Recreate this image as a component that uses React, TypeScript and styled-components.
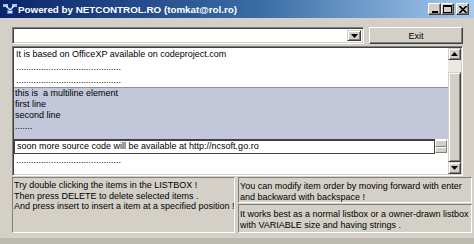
import styled, { createGlobalStyle } from "styled-components";

const GlobalStyle = createGlobalStyle`
  html, body {
    margin: 0;
    padding: 0;
    background: #d4d0c8;
  }
  body {
    font-family: "Liberation Sans", Arial, sans-serif;
    color: #000;
  }
  * {
    box-sizing: border-box;
  }
`;

const Window = styled.div`
  width: 474px;
  height: 244px;
  display: flex;
  flex-direction: column;
  background: #d4d0c8;
  overflow: hidden;
  border-bottom: 6px solid #bcb9b1;
`;

const TitleBar = styled.div`
  height: 18px;
  flex: none;
  display: flex;
  align-items: center;
  padding: 0 5px 0 3px;
  background: linear-gradient(to right, #0a246a 0%, #3a6ea5 55%, #a6caf0 100%);
`;

const TitleText = styled.span`
  flex: 1;
  margin-left: 1px;
  color: #fff;
  font-weight: bold;
  font-size: 9.8px;
  white-space: nowrap;
`;

const CaptionButton = styled.div<{ $gap?: boolean }>`
  width: 13px;
  height: 12px;
  margin-left: ${(p) => (p.$gap ? 2 : 0)}px;
  background: #d4d0c8;
  border: 1px solid;
  border-color: #fff #404040 #404040 #fff;
  box-shadow: inset -1px -1px #808080;
  display: flex;
  align-items: center;
  justify-content: center;
`;

const Body = styled.div`
  flex: 1;
  display: flex;
  flex-direction: column;
  padding: 9px 11px 0 12px;
`;

const TopRow = styled.div`
  display: flex;
  gap: 5px;
  height: 17px;
`;

const Combo = styled.div`
  flex: 1;
  display: flex;
  justify-content: flex-end;
  align-items: stretch;
  background: #fff;
  border: 1px solid;
  border-color: #808080 #fff #fff #808080;
  box-shadow: inset 1px 1px #404040, inset -1px -1px #d4d0c8;
  padding: 2px;
`;

const DropButton = styled.div`
  width: 14px;
  background: #d4d0c8;
  border: 1px solid;
  border-color: #d4d0c8 #404040 #404040 #d4d0c8;
  box-shadow: inset 1px 1px #fff, inset -1px -1px #808080;
  display: flex;
  align-items: center;
  justify-content: center;
`;

const ExitButton = styled.div`
  width: 94px;
  display: flex;
  align-items: center;
  justify-content: center;
  font-size: 9px;
  background: #d4d0c8;
  border: 1px solid;
  border-color: #fff #404040 #404040 #fff;
  box-shadow: inset -1px -1px #808080;
`;

const ListBox = styled.div`
  margin-top: 2px;
  height: 130px;
  display: flex;
  background: #fff;
  border: 1px solid;
  border-color: #808080 #fff #fff #808080;
  box-shadow: inset 1px 1px #404040, inset -1px -1px #d4d0c8;
  padding: 1px;
`;

const Items = styled.div`
  flex: 1;
  display: flex;
  flex-direction: column;
  font-size: 9px;
  min-width: 0;
`;

const Row = styled.div`
  height: 13px;
  line-height: 13px;
  padding-left: 2px;
  white-space: nowrap;
`;

const MultiBlock = styled.div`
  height: 52px;
  background: #c2c7da;
  border-top: 1px solid #8e92a0;
  padding: 0 0 0 1px;
  line-height: 11px;
  white-space: nowrap;
`;

const EditRow = styled.div`
  height: 15px;
  display: flex;
  padding-right: 1px;
`;

const EditBox = styled.div`
  flex: 1;
  border: 1px solid #404040;
  border-top-width: 2px;
  padding-left: 2px;
  line-height: 11px;
  white-space: nowrap;
  overflow: hidden;
`;

const Spin = styled.div`
  width: 12px;
  display: flex;
  flex-direction: column;
  padding: 1px 0;
`;

const SpinButton = styled.div`
  flex: 1;
  background: #d4d0c8;
  border: 1px solid;
  border-color: #fff #808080 #808080 #fff;
`;

const ScrollBar = styled.div`
  width: 13px;
  display: flex;
  flex-direction: column;
`;

const ScrollArrow = styled.div`
  height: 12px;
  background: #d4d0c8;
  border: 1px solid;
  border-color: #d4d0c8 #404040 #404040 #d4d0c8;
  box-shadow: inset 1px 1px #fff, inset -1px -1px #808080;
  display: flex;
  align-items: center;
  justify-content: center;
`;

const Track = styled.div`
  height: 12px;
  background-color: #eae8e4;
`;

const Thumb = styled.div`
  flex: 1;
  background: #d4d0c8;
  border: 1px solid;
  border-color: #d4d0c8 #404040 #404040 #d4d0c8;
  box-shadow: inset 1px 1px #fff, inset -1px -1px #808080;
`;

const BottomRow = styled.div`
  margin-top: 1px;
  height: 56px;
  display: grid;
  grid-template-columns: 223px 1fr;
  gap: 3px;
`;

const RightColumn = styled.div`
  display: flex;
  flex-direction: column;
  gap: 1px;
`;

const StaticText = styled.div<{ $grow?: boolean; $top?: number }>`
  ${(p) => (p.$grow ? "flex: 1;" : "height: 26px;")}
  border: 1px solid;
  border-color: #808080 #fff #fff #808080;
  padding: ${(p) => p.$top ?? 2}px 2px 0 1px;
  font-size: 9px;
  line-height: 10.5px;
  white-space: nowrap;
`;

const Arrow = ({ up }: { up?: boolean }) => (
  <svg width="7" height="4" viewBox="0 0 7 4">
    <path d={up ? "M3.5 0 L7 4 L0 4 Z" : "M0 0 L7 0 L3.5 4 Z"} fill="#000" />
  </svg>
);

const AppIcon = () => (
  <svg width="14" height="12" viewBox="0 0 14 12">
    <rect x="0" y="1" width="5" height="3" fill="#9fc4f0" />
    <rect x="9" y="1" width="5" height="3" fill="#9fc4f0" />
    <path d="M3 3 L7 7 L11 3" stroke="#e8f0ff" strokeWidth="1.5" fill="none" />
    <rect x="4" y="7" width="6" height="4" fill="#3d7fe0" />
    <rect x="5" y="8" width="4" height="2" fill="#cfe2ff" />
  </svg>
);

const dots = ".".repeat(42);

export default function App() {
  return (
    <>
      <GlobalStyle />
      <Window>
        <TitleBar>
          <AppIcon />
          <TitleText>Powered by NETCONTROL.RO (tomkat@rol.ro)</TitleText>
          <CaptionButton>
            <svg width="6" height="8" viewBox="0 0 6 8">
              <rect x="0" y="6" width="6" height="2" fill="#000" />
            </svg>
          </CaptionButton>
          <CaptionButton>
            <svg width="9" height="8" viewBox="0 0 9 8">
              <rect x="0.5" y="0.5" width="8" height="7" fill="none" stroke="#000" />
              <rect x="0" y="0" width="9" height="2" fill="#000" />
            </svg>
          </CaptionButton>
          <CaptionButton $gap>
            <svg width="8" height="7" viewBox="0 0 8 7">
              <path d="M0.5 0 L7.5 7 M7.5 0 L0.5 7" stroke="#000" strokeWidth="1.6" />
            </svg>
          </CaptionButton>
        </TitleBar>
        <Body>
          <TopRow>
            <Combo>
              <DropButton>
                <Arrow />
              </DropButton>
            </Combo>
            <ExitButton>Exit</ExitButton>
          </TopRow>
          <ListBox>
            <Items>
              <Row>It is based on OfficeXP available on codeproject.com</Row>
              <Row>{dots}</Row>
              <Row>{dots}</Row>
              <MultiBlock>
                <div>this is&nbsp; a multiline element</div>
                <div>first line</div>
                <div>second line</div>
                <div>.......</div>
              </MultiBlock>
              <EditRow>
                <EditBox>soon more source code will be available at http://ncsoft.go.ro</EditBox>
                <Spin>
                  <SpinButton />
                  <SpinButton />
                </Spin>
              </EditRow>
              <Row>{dots}</Row>
            </Items>
            <ScrollBar>
              <ScrollArrow>
                <Arrow up />
              </ScrollArrow>
              <Track />
              <Thumb />
              <ScrollArrow>
                <Arrow />
              </ScrollArrow>
            </ScrollBar>
          </ListBox>
          <BottomRow>
            <StaticText $grow $top={2}>
              Try double clicking the items in the LISTBOX !
              <br />
              Then press DELETE to delete selected items .
              <br />
              And press insert to insert a item at a specified position !
            </StaticText>
            <RightColumn>
              <StaticText $top={3}>
                You can modify item order by moving forward with enter
                <br />
                and backward with backspace !
              </StaticText>
              <StaticText $grow $top={4}>
                It works best as a normal listbox or a owner-drawn listbox
                <br />
                with VARIABLE size and having strings .
              </StaticText>
            </RightColumn>
          </BottomRow>
        </Body>
      </Window>
    </>
  );
}
